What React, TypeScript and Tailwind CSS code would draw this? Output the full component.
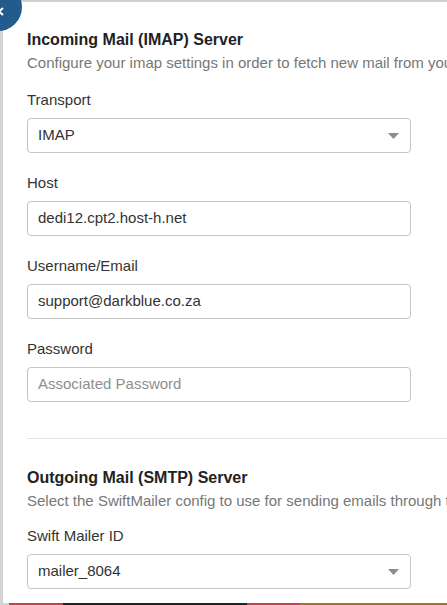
import React from "react";

function Caret() {
  return (
    <svg width="11" height="6" viewBox="0 0 11 6" className="absolute right-[11px] top-[14px]">
      <polygon points="0,0 11,0 5.5,6" fill="#8c8c8c" />
    </svg>
  );
}

function Field({ label, value, placeholder, select }: { label: string; value?: string; placeholder?: string; select?: boolean }) {
  return (
    <div className="flex flex-col w-[384px]">
      <div className="h-[20px] leading-[20px] text-[15px] text-[#333] mb-[8px]">{label}</div>
      <div className="relative h-[35px] border border-[#c4c4c4] rounded-[4px] bg-white flex items-center px-[10px] text-[15px]">
        {value ? (
          <span className="text-[#333]">{value}</span>
        ) : (
          <span className="text-[#8f8f8f]">{placeholder}</span>
        )}
        {select && <Caret />}
      </div>
    </div>
  );
}

export default function App() {
  return (
    <div
      className="relative w-[447px] h-[605px] overflow-hidden bg-white"
      style={{ fontFamily: '"Liberation Sans", Arial, sans-serif' }}
    >
      <div className="absolute left-0 top-0 w-[3px] h-full bg-[#d4d4d4]" />
      <div className="absolute left-0 top-0 w-full h-[2px] bg-[#d0d0d0]" />
      <div className="absolute left-[-26px] top-[-17px] w-[48px] h-[48px] rounded-full bg-[#235b8c]">
        <svg width="30" height="48" viewBox="0 0 30 48" className="absolute left-0 top-0">
          <path d="M29 25 L25 28.5 L29 32" stroke="white" strokeWidth="2" fill="none" />
        </svg>
      </div>

      <div className="flex flex-col pl-[27px] pt-[30px]">
        <div className="text-[16px] font-bold text-[#222] leading-[20px] whitespace-nowrap">Incoming Mail (IMAP) Server</div>
        <div className="text-[15px] text-[#777] leading-[20px] mt-[3px] whitespace-nowrap">
          Configure your imap settings in order to fetch new mail from your mailbox.
        </div>
        <div className="flex flex-col gap-[20px] mt-[17px]">
          <Field label="Transport" value="IMAP" select />
          <Field label="Host" value="dedi12.cpt2.host-h.net" />
          <Field label="Username/Email" value="support@darkblue.co.za" />
          <Field label="Password" placeholder="Associated Password" />
        </div>
        <div className="mt-[36px] h-px w-[600px] bg-[#e3e3e3]" />
        <div className="mt-[29px] text-[16px] font-bold text-[#222] leading-[20px] whitespace-nowrap">Outgoing Mail (SMTP) Server</div>
        <div className="text-[15px] text-[#777] leading-[20px] mt-[3px] whitespace-nowrap">
          Select the SwiftMailer config to use for sending emails through this account.
        </div>
        <div className="mt-[15px]">
          <Field label="Swift Mailer ID" value="mailer_8064" select />
        </div>
      </div>

      <div className="absolute left-0 bottom-0 w-full h-[2px] flex">
        <div className="w-[9px] bg-[#d4d4d4]" />
        <div className="w-[54px] bg-[#c0444c]" />
        <div className="w-[184px] bg-[#222]" />
        <div className="w-[53px] bg-[#c0444c]" />
        <div className="flex-1 bg-[#a8742a]" />
      </div>
    </div>
  );
}
